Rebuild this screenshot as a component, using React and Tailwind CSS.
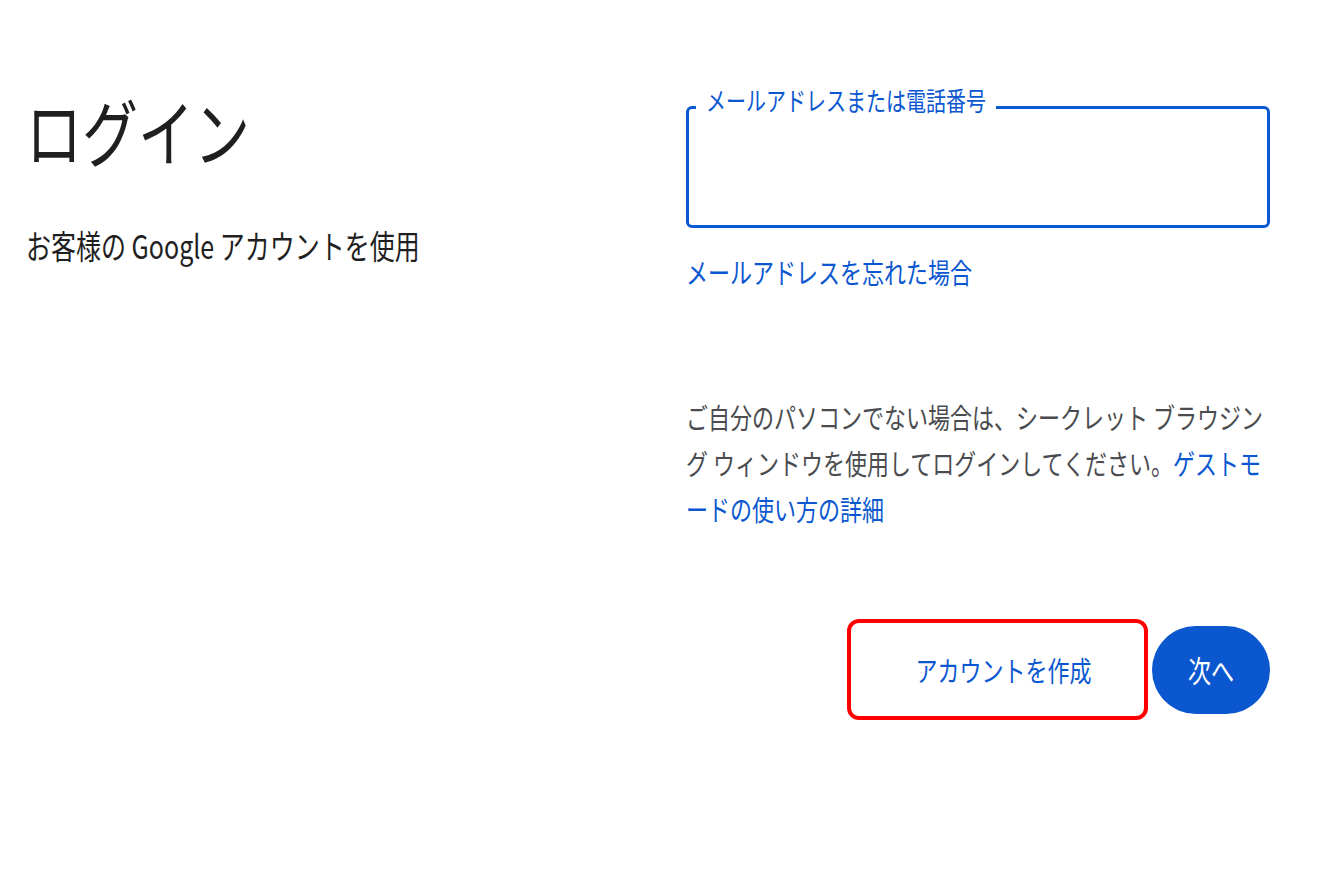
import React from 'react'

// 参照画像は縦に引き伸ばされているので、文字だけ縦方向に拡大する
function Tall({ children, className = '' }) {
  return <span className={`inline-block scale-y-[1.3] ${className}`}>{children}</span>
}

export default function App() {
  return (
    <div
      className="min-h-screen w-full bg-white flex pl-[26px]"
      style={{ fontFamily: '"Noto Sans CJK JP", "Noto Sans", sans-serif' }}
    >
      {/* 左側：見出し */}
      <div className="w-[660px] shrink-0 pt-[97px]">
        <h1 className="text-[56px] leading-[66px] font-normal text-[#1f1f1f]">
          <Tall>ログイン</Tall>
        </h1>
        <p className="mt-[67px] text-[25px] leading-[30px] text-[#1f1f1f]">
          <Tall>お客様の Google アカウントを使用</Tall>
        </p>
      </div>

      {/* 右側：フォーム */}
      <div className="w-[584px] shrink-0 flex flex-col pt-[106px]">
        <div className="relative h-[122px] border-[3px] border-[#0b57d0] rounded-[6px]">
          <span className="absolute -top-[20px] left-[7px] px-[10px] bg-white text-[20px] leading-[24px] text-[#0b57d0] whitespace-nowrap">
            <Tall>メールアドレスまたは電話番号</Tall>
          </span>
          <input
            type="text"
            className="w-full h-full bg-transparent outline-none px-4 text-[22px] text-[#1f1f1f]"
          />
        </div>

        <a href="#" className="mt-[28px] self-start text-[22px] leading-[30px] text-[#0b57d0]">
          <Tall>メールアドレスを忘れた場合</Tall>
        </a>

        <div className="mt-[107px] text-[22px] leading-[46px] text-[#4a4c50] whitespace-nowrap">
          <div>
            <Tall>ご自分のパソコンでない場合は、シークレット ブラウジン</Tall>
          </div>
          <div>
            <Tall>
              グ ウィンドウを使用してログインしてください。
              <a href="#" className="text-[#0b57d0]">ゲストモ</a>
            </Tall>
          </div>
          <div>
            <Tall>
              <a href="#" className="text-[#0b57d0]">ードの使い方の詳細</a>
            </Tall>
          </div>
        </div>

        <div className="mt-[88px] flex justify-end items-center">
          <button
            type="button"
            className="w-[301px] h-[101px] border-[4px] border-[#ff0000] rounded-[12px] bg-white pl-[12px] text-[22px] text-[#0b57d0] flex items-center justify-center"
          >
            <Tall>アカウントを作成</Tall>
          </button>
          <button
            type="button"
            className="ml-[4px] w-[118px] h-[88px] rounded-full bg-[#0b57d0] text-[23px] text-white flex items-center justify-center"
          >
            <Tall>次へ</Tall>
          </button>
        </div>
      </div>
    </div>
  )
}
